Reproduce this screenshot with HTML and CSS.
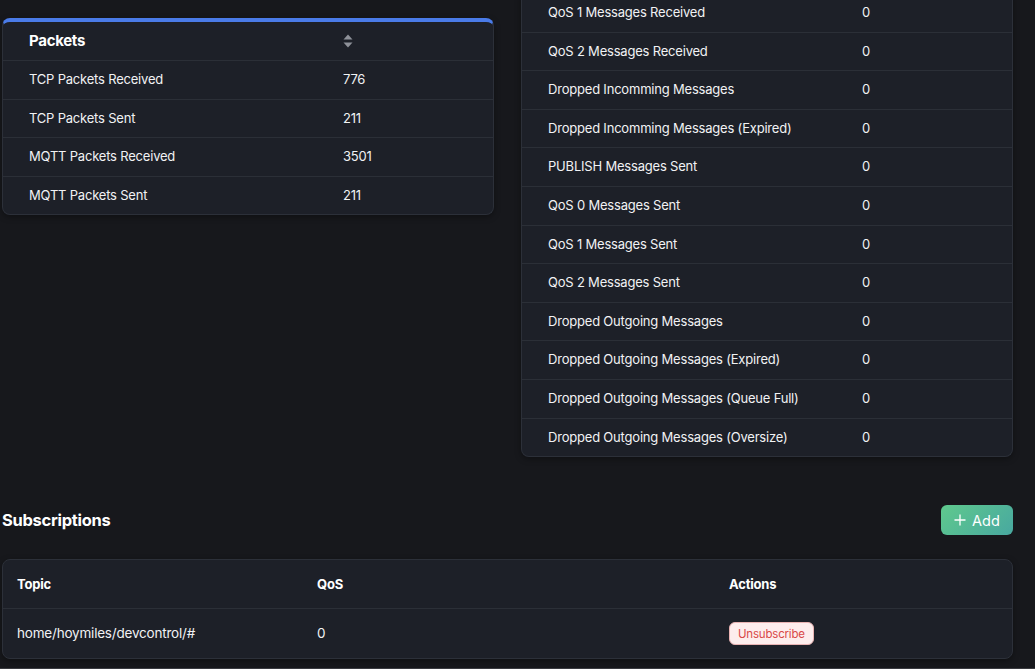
FILE: index.html
```html
<!DOCTYPE html>
<html lang="en">
<head>
    <meta charset="UTF-8">
    <meta name="viewport" content="width=device-width, initial-scale=1.0">
    <title>MQTT Broker Info</title>
    <link rel="stylesheet" href="styles.css">
</head>
<body>
    <div class="page">
        <div class="stats">
            <div class="card card-packets">
                <table class="stat-table">
                    <thead>
                        <tr>
                            <th>Packets</th>
                            <th>
                                <svg class="sort-icon" width="10" height="14" viewBox="0 0 10 14">
                                    <path d="M0.5 5.5 L5 0.5 L9.5 5.5 Z" fill="currentColor"/>
                                    <path d="M0.5 8.5 L5 13.5 L9.5 8.5 Z" fill="currentColor"/>
                                </svg>
                            </th>
                        </tr>
                    </thead>
                    <tbody>
                        <tr><td>TCP Packets Received</td><td>776</td></tr>
                        <tr><td>TCP Packets Sent</td><td>211</td></tr>
                        <tr><td>MQTT Packets Received</td><td>3501</td></tr>
                        <tr><td>MQTT Packets Sent</td><td>211</td></tr>
                    </tbody>
                </table>
            </div>

            <div class="card card-messages">
                <table class="stat-table">
                    <tbody>
                        <tr><td>QoS 1 Messages Received</td><td>0</td></tr>
                        <tr><td>QoS 2 Messages Received</td><td>0</td></tr>
                        <tr><td>Dropped Incomming Messages</td><td>0</td></tr>
                        <tr><td>Dropped Incomming Messages (Expired)</td><td>0</td></tr>
                        <tr><td>PUBLISH Messages Sent</td><td>0</td></tr>
                        <tr><td>QoS 0 Messages Sent</td><td>0</td></tr>
                        <tr><td>QoS 1 Messages Sent</td><td>0</td></tr>
                        <tr><td>QoS 2 Messages Sent</td><td>0</td></tr>
                        <tr><td>Dropped Outgoing Messages</td><td>0</td></tr>
                        <tr><td>Dropped Outgoing Messages (Expired)</td><td>0</td></tr>
                        <tr><td>Dropped Outgoing Messages (Queue Full)</td><td>0</td></tr>
                        <tr><td>Dropped Outgoing Messages (Oversize)</td><td>0</td></tr>
                    </tbody>
                </table>
            </div>
        </div>

        <div class="section-head">
            <h2>Subscriptions</h2>
            <button class="btn-add">
                <svg width="12" height="12" viewBox="0 0 12 12">
                    <path d="M6 0.5 V11.5 M0.5 6 H11.5" stroke="currentColor" stroke-width="1.3" fill="none"/>
                </svg>
                Add
            </button>
        </div>

        <div class="card card-subs">
            <table class="subs-table">
                <thead>
                    <tr>
                        <th class="col-topic">Topic</th>
                        <th class="col-qos">QoS</th>
                        <th>Actions</th>
                    </tr>
                </thead>
                <tbody>
                    <tr>
                        <td>home/hoymiles/devcontrol/#</td>
                        <td>0</td>
                        <td><button class="btn-unsub">Unsubscribe</button></td>
                    </tr>
                </tbody>
            </table>
        </div>

        <div class="footer-line"></div>
    </div>
</body>
</html>
```

FILE: styles.css
```css
body {
    margin: 0;
    background-color: #17181c;
    color: #f1f2f4;
    font-family: Inter, Roboto, "Liberation Sans", Arial, sans-serif;
    font-size: 13px;
    letter-spacing: -0.2px;
    overflow: hidden;
}
.page {
    padding: 0 22px 0 2px;
}
.stats {
    display: grid;
    grid-template-columns: 1fr 1fr;
    column-gap: 27px;
    align-items: start;
    margin-top: -10px;
}
.card {
    background-color: #1d2028;
    border: 1px solid #2c3039;
    border-radius: 8px;
    box-shadow: 0 2px 6px rgba(0, 0, 0, 0.35);
    overflow: hidden;
}
.card-packets,
.card-messages {
    border-top: 4px solid #4a7be8;
}
.card-packets {
    margin-top: 28px;
}
.stat-table {
    width: 100%;
    border-collapse: collapse;
}
.stat-table th,
.stat-table td {
    text-align: left;
    padding: 9px 0 9px 26px;
    border-bottom: 1px solid #2b2f37;
}
.stat-table th {
    font-size: 15px;
    font-weight: 700;
    letter-spacing: -0.3px;
    color: #ffffff;
    line-height: 20px;
}
.stat-table td {
    line-height: 19.6px;
}
.stat-table tr > :first-child {
    width: 288px;
}
.stat-table tbody tr:last-child td {
    border-bottom: none;
}
.sort-icon {
    display: block;
    color: #8e9199;
}
.section-head {
    display: flex;
    align-items: center;
    justify-content: space-between;
    margin-top: 48px;
}
.section-head h2 {
    margin: 0;
    font-size: 16.5px;
    font-weight: 700;
    letter-spacing: -0.3px;
    color: #ffffff;
}
.btn-add {
    display: flex;
    align-items: center;
    gap: 6px;
    height: 30px;
    width: 72px;
    justify-content: center;
    border: none;
    border-radius: 6px;
    background: linear-gradient(135deg, #5fc98d, #48a8a0);
    color: #ffffff;
    font-family: inherit;
    font-size: 14.5px;
    cursor: pointer;
}
.card-subs {
    margin-top: 24px;
}
.subs-table {
    width: 100%;
    border-collapse: collapse;
}
.subs-table th,
.subs-table td {
    text-align: left;
    padding: 14px 14px;
}
.subs-table th {
    font-size: 13px;
    font-weight: 700;
    color: #ffffff;
    line-height: 20px;
    border-bottom: 1px solid #2b2f37;
}
.subs-table td {
    font-size: 13.5px;
    padding-top: 13px;
    padding-bottom: 13px;
    line-height: 23px;
}
.col-topic {
    width: 272px;
}
.col-qos {
    width: 384px;
}
.btn-unsub {
    display: block;
    height: 23px;
    padding: 0 8px;
    background-color: #fdeded;
    border: 1px solid #e9b3b3;
    border-radius: 6px;
    color: #d94848;
    font-family: inherit;
    font-size: 11.5px;
    letter-spacing: -0.2px;
    cursor: pointer;
}
.footer-line {
    margin-top: 9px;
    margin-left: -2px;
    margin-right: -22px;
    height: 2px;
    background-color: #3a3b40;
}
```
